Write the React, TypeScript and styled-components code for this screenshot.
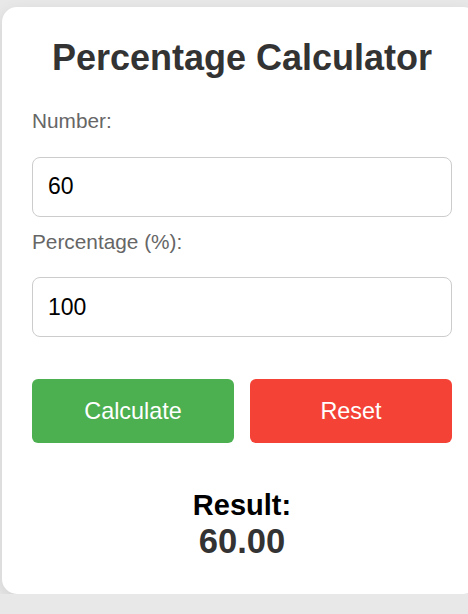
import { useState } from "react";
import styled, { createGlobalStyle } from "styled-components";

const GlobalStyle = createGlobalStyle`
  html, body {
    margin: 0;
    padding: 0;
    background: #e8e8e8;
    overflow: hidden;
    font-family: "Liberation Sans", Arial, sans-serif;
  }
`;

const Page = styled.div`
  padding: 7px 0 0 2px;
`;

const Card = styled.div`
  width: 476px;
  box-sizing: border-box;
  background: #fff;
  border-radius: 15px;
  padding: 30px 26px 33px 30px;
  box-shadow: 0 5px 15px rgba(0, 0, 0, 0.1);
`;

const Title = styled.h1`
  margin: 0 0 30px;
  font-size: 36px;
  font-weight: bold;
  color: #333;
  text-align: center;
`;

const Field = styled.div`
  margin-bottom: 13px;
`;

const Label = styled.label`
  display: block;
  font-size: 20.8px;
  color: #666;
  margin-bottom: 23.5px;
`;

const Input = styled.input`
  display: block;
  width: 420px;
  box-sizing: border-box;
  padding: 15.5px 15px;
  font-family: "Liberation Sans", Arial, sans-serif;
  font-size: 23px;
  color: #000;
  border: 1px solid #ccc;
  border-radius: 8px;
  outline: none;
`;

const ButtonRow = styled.div`
  display: flex;
  gap: 16px;
  width: 420px;
  margin-top: 42px;
`;

const Button = styled.button<{ $bg: string }>`
  flex: 1;
  height: 64px;
  border: none;
  border-radius: 6px;
  background: ${(p) => p.$bg};
  color: #fff;
  font-family: "Liberation Sans", Arial, sans-serif;
  font-size: 23.4px;
  cursor: pointer;
`;

const Result = styled.div`
  margin-top: 46px;
  width: 420px;
  text-align: center;
`;

const ResultLabel = styled.div`
  font-size: 29px;
  font-weight: bold;
  color: #000;
`;

const ResultValue = styled.div`
  font-size: 34.6px;
  font-weight: bold;
  color: #333;
`;

export default function App() {
  const [num, setNum] = useState("60");
  const [pct, setPct] = useState("100");
  const [result, setResult] = useState("60.00");

  const calculate = () => {
    const n = parseFloat(num);
    const p = parseFloat(pct);
    if (isNaN(n) || isNaN(p)) {
      setResult("");
      return;
    }
    setResult(((n * p) / 100).toFixed(2));
  };

  const reset = () => {
    setNum("");
    setPct("");
    setResult("");
  };

  return (
    <Page>
      <GlobalStyle />
      <Card>
        <Title>Percentage Calculator</Title>
        <Field>
          <Label htmlFor="num">Number:</Label>
          <Input id="num" type="text" value={num} onChange={(e) => setNum(e.target.value)} />
        </Field>
        <Field>
          <Label htmlFor="pct">Percentage (%):</Label>
          <Input id="pct" type="text" value={pct} onChange={(e) => setPct(e.target.value)} />
        </Field>
        <ButtonRow>
          <Button $bg="#4caf50" onClick={calculate}>Calculate</Button>
          <Button $bg="#f44336" onClick={reset}>Reset</Button>
        </ButtonRow>
        <Result>
          <ResultLabel>Result:</ResultLabel>
          <ResultValue>{result}</ResultValue>
        </Result>
      </Card>
    </Page>
  );
}
